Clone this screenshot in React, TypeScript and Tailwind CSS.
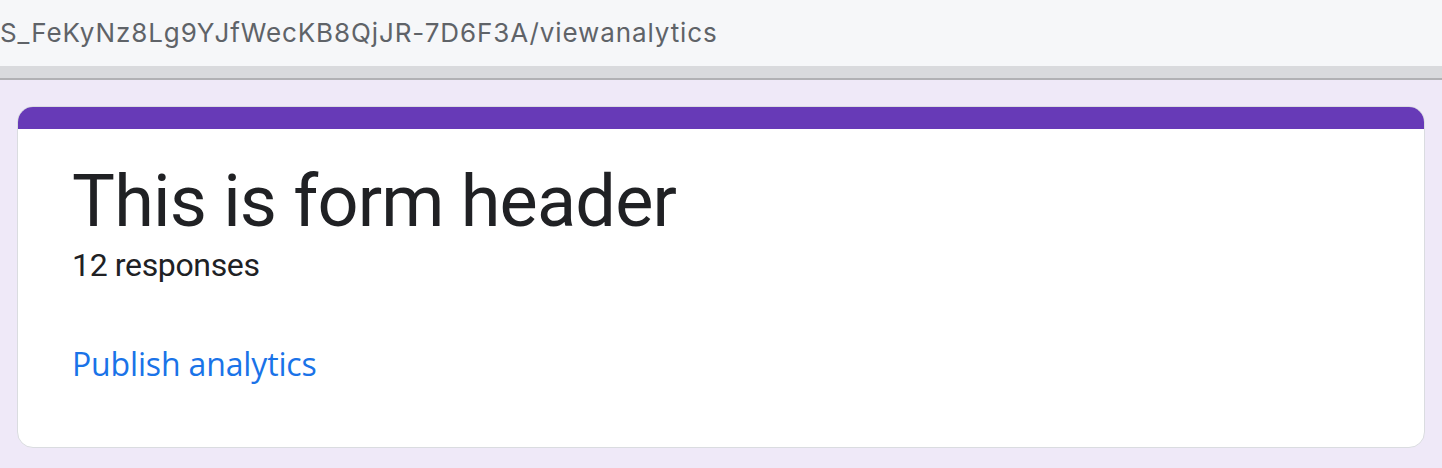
export default function App() {
  return (
    <div className="h-[468px] w-full overflow-hidden bg-[#efe9f8] font-['Roboto',sans-serif]">
      {/* address bar */}
      <div className="flex h-[66px] items-center bg-[#f6f7f9]">
        <span className="font-['Inter',sans-serif] text-[26px] leading-none tracking-[0.9px] text-[#5f6368]">
          S_FeKyNz8Lg9YJfWecKB8QjJR-7D6F3A/viewanalytics
        </span>
      </div>
      <div className="h-[14px] border-b-2 border-[#b1b1b4] bg-[#d9dadd]" />

      <div className="px-[17px] pt-[26px]">
        <div className="overflow-hidden rounded-2xl border border-[#dadce0] bg-white">
          <div className="h-[22px] bg-[#673ab7]" />
          <div className="px-[54px] pb-[67px] pt-[30px]">
            <h1 className="text-[72px] leading-[1.2] tracking-[-0.8px] text-[#202124]">This is form header</h1>
            <p className="text-[32px] leading-[1.3] tracking-[-0.35px] text-[#202124]">12 responses</p>
            <a className="mt-[61px] block font-['Open_Sans',sans-serif] text-[32px] leading-none tracking-[-0.15px] text-[#1a73e8]">
              Publish analytics
            </a>
          </div>
        </div>
      </div>
    </div>
  );
}
